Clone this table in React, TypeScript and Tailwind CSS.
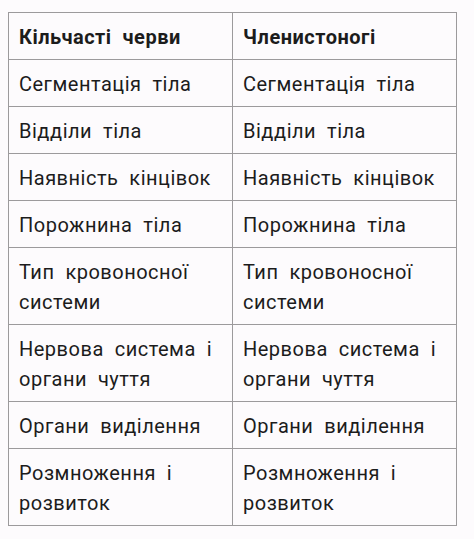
const rows: [string, string][] = [
  ['Сегментація  тіла', 'Сегментація  тіла'],
  ['Відділи  тіла', 'Відділи  тіла'],
  ['Наявність  кінцівок', 'Наявність  кінцівок'],
  ['Порожнина  тіла', 'Порожнина  тіла'],
  ['Тип  кровоносної системи', 'Тип  кровоносної системи'],
  ['Нервова  система  і органи  чуття', 'Нервова  система  і органи  чуття'],
  ['Органи  виділення', 'Органи  виділення'],
  ['Розмноження  і розвиток', 'Розмноження  і розвиток'],
];

export default function App() {
  return (
    <div className="w-[474px] h-[539px] bg-[#fdfbfd] pt-3 pl-2 font-['Roboto',sans-serif] text-[#1c1c1c]">
      <table className="border-collapse w-[449px] table-fixed">
        <thead>
          <tr>
            <th className="w-[224px] border border-[#9c9a9c] text-left font-bold text-[20px] leading-[30px] pl-[10px] pr-2 pt-[9px] pb-[7px] tracking-[0.5px] whitespace-pre-wrap">
              Кільчасті  черви
            </th>
            <th className="border border-[#9c9a9c] text-left font-bold text-[20px] leading-[30px] pl-[10px] pr-2 pt-[9px] pb-[7px] tracking-[0.5px] whitespace-pre-wrap">
              Членистоногі
            </th>
          </tr>
        </thead>
        <tbody>
          {rows.map(([a, b], i) => (
            <tr key={i}>
              <td className="border border-[#9c9a9c] text-[20px] leading-[30px] pl-[10px] pr-2 pt-[9px] pb-[7px] tracking-[0.5px] whitespace-pre-wrap">
                {a}
              </td>
              <td className="border border-[#9c9a9c] text-[20px] leading-[30px] pl-[10px] pr-2 pt-[9px] pb-[7px] tracking-[0.5px] whitespace-pre-wrap">
                {b}
              </td>
            </tr>
          ))}
        </tbody>
      </table>
    </div>
  );
}
